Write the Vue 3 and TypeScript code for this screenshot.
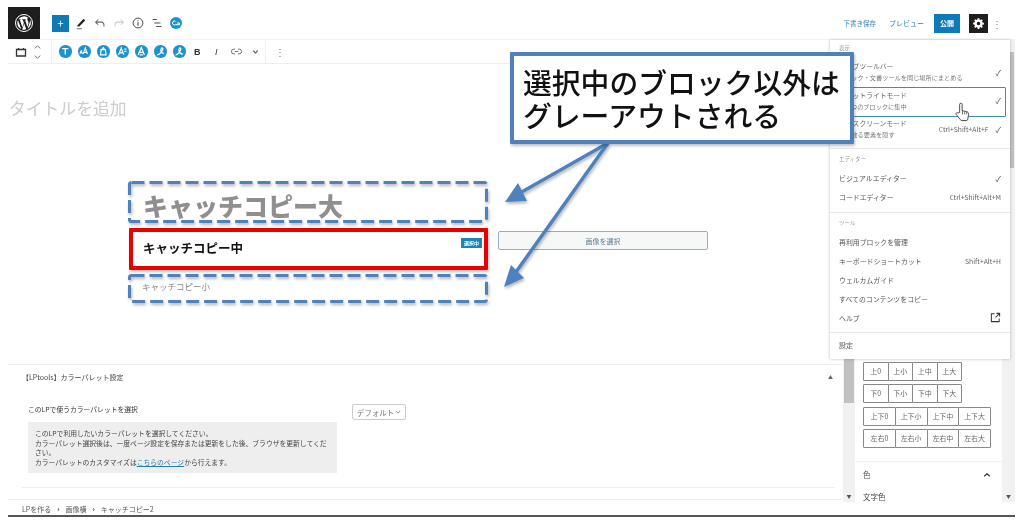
<script setup lang="ts">
const circleIcons: string[] = [
  'M3 3.500h6M6 3.500V9',
  'M1.800 8.500 3 5.800l1.200 2.700M5 8.500l2-5.500 2 5.500M5.800 7h2.400',
  'M3.300 9.500h5.400L8 4.500H4zM4.800 4.500 6 2.500l1.200 2',
  'M2.500 9.500 5 2.800l2.500 6.700M3.500 7.500h3M8 4h2M8 6h2',
  'M3 9.500 6 2.500l3 7M4.200 7h3.600M4.500 9.500h3',
  'M3 9.500c2 0 5-3 5.500-5.500C8.800 2.800 7.500 2.500 7 3.500 6 5.500 7 8 9.500 8',
  'M2.500 9.500c2 0 4.500-3 5-5.500.3-1.200-1-1.500-1.500-.5-1 2 0 4.500 3.500 5.500',
]
const marginRows: string[][] = [
  ['上0', '上小', '上中', '上大'],
  ['下0', '下小', '下中', '下大'],
]
const wideRows: string[][] = [
  ['上下0', '上下小', '上下中', '上下大'],
  ['左右0', '左右小', '左右中', '左右大'],
]
const viewItems = [
  { title: 'トップツールバー', sub: 'ブロック・文書ツールを同じ場所にまとめる', key: '', active: false },
  { title: 'スポットライトモード', sub: 'ひとつのブロックに集中', key: '', active: true },
  { title: 'フルスクリーンモード', sub: '気が散る要素を隠す', key: 'Ctrl+Shift+Alt+F', active: false },
]
const toolItems = [
  { label: '再利用ブロックを管理', key: '' },
  { label: 'キーボードショートカット', key: 'Shift+Alt+H' },
  { label: 'ウェルカムガイド', key: '' },
  { label: 'すべてのコンテンツをコピー', key: '' },
]
</script>

<template>
  <div class="page">
    <div class="screen">
      <header class="topbar">
        <div class="wp-logo">
          <svg viewBox="0 0 24 24" width="20" height="20">
            <circle cx="12" cy="12" r="10.200" fill="none" stroke="#fff" stroke-width="1.200" />
            <path d="M4 12c0 3.200 1.900 6 4.600 7.300L4.800 8.800C4.300 9.800 4 10.900 4 12zm13.400-.4c0-1-.4-1.700-.7-2.200-.4-.7-.8-1.200-.8-1.900 0-.7.6-1.400 1.300-1.400h.1A8 8 0 0 0 5.200 7.600h.5c.8 0 2.100-.1 2.100-.1.400 0 .5.600.1.600 0 0-.4.100-.9.100l3 8.800 1.800-5.300-1.300-3.500c-.4 0-.8-.1-.8-.1-.4 0-.4-.7.1-.6 0 0 1.300.1 2.100.1.800 0 2.100-.1 2.100-.1.400 0 .5.600.1.600 0 0-.4.100-.9.100l2.900 8.700.8-2.800c.4-1 .6-1.800.6-2.500zm-5.200 1.100-2.400 7a8 8 0 0 0 4.900-.1l-.1-.1-2.400-6.800zm7-4.600.1.800c0 .8-.2 1.700-.6 2.900l-2.400 7A8 8 0 0 0 19.200 8.100z" fill="#fff" />
          </svg>
        </div>
        <button class="add-btn">+</button>
        <svg class="ti" viewBox="0 0 16 16"><path d="M4 10.500 11 3.200l1.800 1.800L6 12H4z" fill="#222" /><path d="M3 14.500h6" stroke="#888" stroke-width="1.400" /></svg>
        <svg class="ti" viewBox="0 0 16 16"><path d="M6 4 3 7l3 3M3 7h6.500a3 3 0 0 1 3 3v2" fill="none" stroke="#666" stroke-width="1.200" /></svg>
        <svg class="ti" viewBox="0 0 16 16"><path d="m10 4 3 3-3 3m3-3H6.500a3 3 0 0 0-3 3v2" fill="none" stroke="#ccc" stroke-width="1.200" /></svg>
        <svg class="ti" viewBox="0 0 16 16"><circle cx="8" cy="8" r="5.600" fill="none" stroke="#444" stroke-width="1.100" /><path d="M8 7v4M8 4.800v1.200" stroke="#444" stroke-width="1.200" /></svg>
        <svg class="ti" viewBox="0 0 16 16"><path d="M3 4h5M5 8h7M7 12h6" stroke="#555" stroke-width="1.200" /></svg>
        <span class="lp-icon"><svg viewBox="0 0 12 12" width="12" height="12"><path d="M5.500 4.300a2 2 0 1 0 0 3.400h4V6H7" fill="none" stroke="#fff" stroke-width="1" /></svg></span>
        <div class="top-right">
          <span class="link-text draft">下書き保存</span>
          <span class="link-text preview">プレビュー</span>
          <button class="publish">公開</button>
          <span class="gear">
            <svg viewBox="0 0 16 16" width="13" height="13"><path d="M7 1.500h2l.4 1.800 1 .5 1.500-1 1.400 1.400-1 1.500.5 1 1.800.4v2l-1.800.4-.5 1 1 1.500-1.400 1.400-1.500-1-1 .5-.4 1.800H7l-.4-1.800-1-.5-1.500 1-1.400-1.400 1-1.500-.5-1L1.400 9V7l1.800-.4.5-1-1-1.500 1.400-1.400 1.500 1 1-.5zM8 5.800a2.200 2.200 0 1 0 0 4.400 2.200 2.200 0 0 0 0-4.400z" fill="#fff" fill-rule="evenodd" /></svg>
          </span>
          <span class="kebab">⋮</span>
        </div>
      </header>

      <div class="blockbar">
        <div class="bar-group first">
          <svg class="bi" viewBox="0 0 14 14"><path d="M2.500 4.500h9v6.500h-9zM4.500 4.500V3M9.500 4.500V3" fill="none" stroke="#333" stroke-width="1.300" /></svg>
          <svg class="mover" viewBox="0 0 10 20"><path d="M2 6l3-3 3 3M2 14l3 3 3-3" fill="none" stroke="#666" stroke-width="1" /></svg>
        </div>
        <div class="bar-group tools">
          <span v-for="(d, i) in circleIcons" :key="i" class="circle">
            <svg viewBox="0 0 12 12" width="12.500" height="12.500"><path :d="d" fill="none" stroke="#fff" stroke-width="1.200" /></svg>
          </span>
          <b class="bold">B</b>
          <i class="ital">I</i>
          <svg class="bi small" viewBox="0 0 14 14"><path d="M5.500 4.500H4a2.500 2.500 0 0 0 0 5h1.500M8.500 4.500H10a2.500 2.500 0 0 1 0 5H8.500M5 7h4" fill="none" stroke="#666" stroke-width="1" /></svg>
          <svg class="bi small chev-icon" viewBox="0 0 14 14"><path d="m4.500 6 2.500 2.500L9.500 6" fill="none" stroke="#555" stroke-width="1.200" /></svg>
        </div>
        <div class="bar-group more"><span class="dots">⋮</span></div>
      </div>

      <div class="workspace">
        <main class="editor">
          <h1 class="post-title">タイトルを追加</h1>
          <section class="content">
            <div class="blocks">
              <div class="block big">
                <svg class="dash" viewBox="0 0 360 42" width="360" height="42"><rect x="1.500" y="1.500" width="357" height="39" rx="2" /></svg>
                キャッチコピー大
              </div>
              <div class="block middle">
                キャッチコピー中
                <span class="badge">選択中</span>
              </div>
              <div class="block small-copy">
                <svg class="dash" viewBox="0 0 360 29" width="360" height="29"><rect x="1.500" y="1.500" width="357" height="26" rx="2" /></svg>
                キャッチコピー小
              </div>
            </div>
            <button class="image-btn">画像を選択</button>
          </section>
          <section class="metabox">
            <div class="meta-head">
              <span>【LPtools】カラーパレット設定</span>
              <span class="caret">▲</span>
            </div>
            <div class="meta-body">
              <div class="meta-main">
                <p class="meta-label">このLPで使うカラーパレットを選択</p>
                <div class="note">
                  このLPで利用したいカラーパレットを選択してください。<br />
                  カラーパレット選択後は、一度ページ設定を保存または更新をした後、ブラウザを更新してください。<br />
                  カラーパレットのカスタマイズは<a class="note-link">こちらのページ</a>から行えます。
                </div>
              </div>
              <div class="fake-select">
                デフォルト
                <svg viewBox="0 0 8 8" width="6" height="6"><path d="m1 2.500 3 3 3-3" fill="none" stroke="#666" stroke-width="1" /></svg>
              </div>
            </div>
            <div class="meta-rule"></div>
          </section>
        </main>

        <div class="scroll-a">
          <span class="thumb-a"></span>
          <span class="arrow-down">▼</span>
        </div>

        <aside class="sidebar">
          <div class="button-rows">
            <div class="btn-group">
              <div v-for="(row, r) in marginRows" :key="r" class="btn-row">
                <span v-for="b in row" :key="b" class="m-btn">{{ b }}</span>
              </div>
            </div>
            <div class="btn-group">
              <div v-for="(row, r) in wideRows" :key="'w' + r" class="btn-row wide">
                <span v-for="b in row" :key="b" class="m-btn">{{ b }}</span>
              </div>
            </div>
          </div>
          <div class="color-head">
            <span>色</span>
            <svg viewBox="0 0 10 10" width="8" height="8"><path d="m1.500 6.500 3.500-3 3.500 3" fill="none" stroke="#333" stroke-width="1.500" /></svg>
          </div>
          <div class="color-label">文字色</div>
        </aside>

        <div class="scroll-b">
          <span class="thumb-b"></span>
          <span class="arrow-down">▼</span>
        </div>
      </div>

      <footer class="crumbs">
        <span>LPを作る</span><span class="sep">›</span><span>画像横</span><span class="sep">›</span><span>キャッチコピー2</span>
      </footer>
    </div>

    <div class="menu">
      <section class="menu-sec view-sec">
        <div class="sec-title">表示</div>
        <div v-for="it in viewItems" :key="it.title" class="view-item" :class="{ active: it.active }">
          <div class="view-text">
            <div class="vt">{{ it.title }}</div>
            <div class="vs">{{ it.sub }}</div>
          </div>
          <span v-if="it.key" class="kbd">{{ it.key }}</span>
          <span class="check">✓</span>
        </div>
      </section>
      <section class="menu-sec">
        <div class="sec-title">エディター</div>
        <div class="m-item"><span>ビジュアルエディター</span><span class="check">✓</span></div>
        <div class="m-item"><span>コードエディター</span><span class="kbd">Ctrl+Shift+Alt+M</span></div>
      </section>
      <section class="menu-sec">
        <div class="sec-title">ツール</div>
        <div v-for="t in toolItems" :key="t.label" class="m-item">
          <span>{{ t.label }}</span><span v-if="t.key" class="kbd">{{ t.key }}</span>
        </div>
        <div class="m-item">
          <span>ヘルプ</span>
          <svg viewBox="0 0 12 12" width="11" height="11"><path d="M5 2H1.500v8.500H10V7M7 1.500h3.500V5M10.500 1.500 6 6" fill="none" stroke="#333" stroke-width="1.100" /></svg>
        </div>
      </section>
      <section class="menu-sec last"><div class="m-item">設定</div></section>
    </div>

    <svg class="pointer" viewBox="0 0 20 24" width="19" height="23">
      <path d="M7 12V3.500a1.300 1.300 0 0 1 2.600 0V10l5 1.200c1.200.3 2 1.300 1.800 2.600l-.8 5.200c-.1 1-.8 1.500-1.700 1.500H9.500c-.7 0-1.300-.3-1.700-.9L3.300 14c-.8-1.300 1-2.500 2-1.400z" fill="#fff" stroke="#444" stroke-width="1" />
      <path d="M10 10v4M12.300 11v3M14.500 11.500V14" stroke="#444" stroke-width=".8" />
    </svg>

    <svg class="arrows" viewBox="0 0 1024 522" width="1024" height="522">
      <defs>
        <filter id="sh" x="-20%" y="-20%" width="140%" height="140%">
          <feDropShadow dx="1" dy="2" stdDeviation="1.500" flood-color="#000" flood-opacity=".3" />
        </filter>
      </defs>
      <g filter="url(#sh)">
        <line x1="608" y1="143" x2="520" y2="193" stroke="#4f81bd" stroke-width="3.500" />
        <path d="M505 202 518 183 527 201z" fill="#4f81bd" />
        <line x1="608" y1="143" x2="516" y2="272" stroke="#4f81bd" stroke-width="3.500" />
        <path d="M504 287 511 265 524 278z" fill="#4f81bd" />
      </g>
    </svg>

    <div class="callout">選択中のブロック以外は<br />グレーアウトされる</div>
  </div>
</template>

<style>
html, body { margin: 0; background: #fff; }
</style>

<style scoped>
.page {
  position: relative;
  width: 1024px;
  height: 522px;
  overflow: hidden;
  background: #fff;
  font-family: "Noto Sans CJK JP", "Noto Sans", sans-serif;
  color: #333;
  filter: blur(.35px);
}
.screen {
  display: flex;
  flex-direction: column;
  width: 1007px;
  height: 517px;
  margin-left: 8px;
  border-bottom: 2px solid #555;
  box-sizing: border-box;
  padding-top: 7px;
}
.topbar {
  display: flex;
  align-items: center;
  height: 32px;
  flex: none;
}
.wp-logo {
  width: 32px;
  height: 32px;
  background: #1e1e1e;
  display: flex;
  align-items: center;
  justify-content: center;
}
.add-btn {
  width: 17px;
  height: 17px;
  margin: 0 5px 0 12px;
  border: 0;
  padding: 0;
  background: #0f7ab8;
  color: #fff;
  font-size: 11px;
  line-height: 17px;
  font-family: inherit;
}
.ti {
  width: 14px;
  height: 14px;
  margin-right: 5px;
}
.lp-icon {
  width: 12px;
  height: 12px;
  border-radius: 50%;
  background: #1b93cf;
  margin-left: 1px;
}
.lp-icon svg { display: block; }
.top-right {
  margin-left: auto;
  display: flex;
  align-items: center;
  padding-right: 11px;
}
.link-text { color: #2c7fb0; }
.draft { font-size: 6.500px; }
.preview { margin-left: 13px; font-size: 7px; }
.publish {
  width: 26px;
  height: 19px;
  margin-left: 10px;
  padding: 0;
  border: 0;
  background: #0f7ab8;
  color: #fff;
  font-size: 7px;
  font-weight: 700;
  font-family: inherit;
}
.gear {
  width: 19px;
  height: 19px;
  margin-left: 9px;
  background: #1e1e1e;
  display: flex;
  align-items: center;
  justify-content: center;
}
.kebab {
  width: 14px;
  margin-left: 2px;
  text-align: center;
  font-size: 10px;
  color: #777;
}
.blockbar {
  display: flex;
  height: 25px;
  flex: none;
  border-bottom: 1px solid #eee;
  border-top: 1px solid #f2f2f2;
  box-sizing: border-box;
}
.bar-group {
  display: flex;
  align-items: center;
  border-right: 1px solid #eee;
}
.bar-group.first {
  width: 44px;
  padding-left: 6px;
  gap: 5px;
  box-sizing: border-box;
}
.bi { width: 14px; height: 14px; }
.bi.small { width: 13px; height: 13px; }
.chev-icon { margin-left: -1px; }
.mover { width: 9px; height: 18px; }
.bar-group.tools {
  width: 214px;
  padding-left: 7px;
  gap: 6.500px;
  box-sizing: border-box;
}
.circle {
  width: 12.500px;
  height: 12.500px;
  flex: none;
  border-radius: 50%;
  background: #1b93cf;
  overflow: hidden;
}
.circle svg { display: block; }
.bold { font-size: 9px; margin-left: 2px; color: #333; font-family: "Liberation Sans", sans-serif; }
.ital { font-size: 9px; margin-left: 8px; margin-right: 6px; color: #333; font-family: "Liberation Sans", sans-serif; }
.bar-group.more { border-right: 0; padding-left: 9px; }
.dots { font-size: 10px; color: #777; }
.workspace {
  flex: 1;
  display: flex;
  min-height: 0;
  position: relative;
}
.editor {
  width: 834px;
  flex: none;
  overflow: hidden;
  display: flex;
  flex-direction: column;
  margin-bottom: 2px;
  border-bottom: 1px solid #eee;
  box-sizing: border-box;
}
.post-title {
  margin: 32px 0 0 1px;
  font-size: 16.800px;
  line-height: 24px;
  font-weight: 400;
  color: #ccc;
}
.content {
  display: flex;
  margin: 61px 0 0 121px;
  align-items: flex-start;
  flex: none;
}
.blocks {
  width: 359px;
  display: flex;
  flex-direction: column;
}
.block {
  position: relative;
  box-sizing: border-box;
}
.dash {
  position: absolute;
  left: -1px;
  top: 0;
  filter: drop-shadow(1px 2px 1.500px rgba(0, 0, 0, .3));
}
.dash rect {
  fill: none;
  stroke: #4f81bd;
  stroke-width: 3;
  stroke-dasharray: 13 5;
}
.big {
  height: 42px;
  padding: 3px 0 0 14px;
  font-size: 25px;
  line-height: 42px;
  font-weight: 900;
  color: #8f8f8f;
}
.middle {
  height: 42px;
  margin-top: 5px;
  padding-left: 10px;
  border: 4px solid #e60000;
  border-radius: 1px;
  font-size: 12.500px;
  line-height: 31px;
  font-weight: 700;
  color: #111;
  box-shadow: 1px 2px 3px rgba(0, 0, 0, .25);
}
.badge {
  position: absolute;
  top: 6px;
  right: 2px;
  width: 21px;
  height: 10px;
  background: #1b84b8;
  color: #fff;
  font-size: 5px;
  line-height: 10px;
  text-align: center;
}
.small-copy {
  height: 29px;
  margin-top: 4px;
  padding-left: 13px;
  font-size: 8.500px;
  line-height: 24px;
  color: #888;
}
.image-btn {
  width: 210px;
  height: 19px;
  margin: 50px 0 0 10px;
  padding: 0;
  background: #f6f7f7;
  border: 1px solid #94b0bf;
  border-radius: 2px;
  color: #5d7f93;
  font-size: 7px;
  font-family: inherit;
}
.metabox {
  margin-top: 61px;
  border-top: 1px solid #eee;
  flex: 1;
  min-height: 0;
}
.meta-head {
  display: flex;
  justify-content: space-between;
  padding: 5px 9px 0 14px;
  font-size: 7px;
  line-height: 14px;
  color: #444;
}
.caret { font-size: 5px; color: #666; }
.meta-body {
  display: flex;
  margin-top: 20px;
  padding-left: 20px;
}
.meta-main { width: 309px; }
.meta-label {
  margin: 0;
  font-size: 6.800px;
  line-height: 11px;
  color: #333;
}
.note {
  margin-top: 7px;
  padding: 7px 9px 6px 7px;
  background: #eee;
  font-size: 6.800px;
  line-height: 9.500px;
  color: #444;
}
.note-link { color: #2a7fb0; text-decoration: underline; }
.fake-select {
  width: 54px;
  height: 16px;
  margin: 0 0 0 15px;
  border: 1px solid #ccc;
  box-sizing: border-box;
  display: flex;
  align-items: center;
  justify-content: center;
  gap: 1px;
  font-size: 7.500px;
  color: #777;
  border-radius: 2px;
}
.meta-rule {
  margin: 14px 7px 0 14px;
  border-top: 1px solid #eee;
}
.scroll-a {
  width: 12px;
  margin-left: 1px;
  flex: none;
  background: #f1f1f1;
  position: relative;
}
.thumb-a {
  position: absolute;
  left: 1px;
  right: 1px;
  top: 290px;
  height: 49px;
  background: #c1c1c1;
}
.arrow-down {
  position: absolute;
  bottom: 2px;
  left: 0;
  right: 0;
  text-align: center;
  font-size: 5px;
  line-height: 8px;
  color: #555;
}
.sidebar {
  width: 147px;
  flex: none;
  padding: 298px 0 0 8px;
  box-sizing: border-box;
  overflow: hidden;
}
.button-rows { display: flex; flex-direction: column; gap: 4px; }
.btn-group { display: flex; flex-direction: column; gap: 3px; }
.btn-row { display: flex; height: 19px; }
.btn-row.wide { width: 127px; height: 19px; }
.btn-row.wide .m-btn { flex: 1; }
.m-btn {
  width: 25.500px;
  box-sizing: border-box;
  border: 1px solid #888;
  margin-right: -1px;
  font-size: 7px;
  line-height: 17px;
  text-align: center;
  color: #666;
  border-radius: 1px;
}
.color-head {
  display: flex;
  justify-content: space-between;
  align-items: center;
  margin: 13px 0 0 -8px;
  padding: 7px 11px 0 8px;
  border-top: 1px solid #f0f0f0;
  font-size: 7.500px;
  line-height: 12px;
  color: #555;
}
.color-label {
  margin-top: 10px;
  font-size: 7.500px;
  line-height: 12px;
  color: #444;
}
.scroll-b {
  width: 13px;
  margin-top: -24px;
  flex: none;
  background: #f1f1f1;
  position: relative;
}
.thumb-b {
  position: absolute;
  left: 2px;
  right: 1px;
  top: 12px;
  height: 116px;
  background: #c1c1c1;
}
.crumbs {
  height: 13px;
  flex: none;
  display: flex;
  align-items: center;
  padding-left: 14px;
  gap: 6px;
  font-size: 7px;
  color: #555;
  background: #fff;
}
.sep { color: #333; font-weight: 700; }
.menu {
  position: absolute;
  left: 830px;
  top: 40px;
  width: 180px;
  height: 319px;
  box-sizing: border-box;
  background: #fff;
  box-shadow: 0 0 3px rgba(0, 0, 0, .25);
  font-size: 6.900px;
  color: #555;
}
.menu-sec {
  padding: 5px 0 5px;
  border-bottom: 1px solid #e8e8e8;
}
.view-sec { padding: 3px 0; height: 108.500px; box-sizing: border-box; }
.view-sec .sec-title { margin-bottom: 3.500px; }
.menu-sec.last { border-bottom: 0; padding-top: 3px; }
.sec-title {
  padding-left: 9px;
  margin-bottom: 4.500px;
  font-size: 5.500px;
  line-height: 11px;
  color: #999;
}
.view-item {
  display: flex;
  align-items: center;
  height: 29px;
  padding: 0 9px 0 9px;
  box-sizing: border-box;
}
.view-item:last-child { margin-top: -2px; }
.view-item.active {
  margin-right: 4px;
  height: 30px;
  border: 1px solid #3f8fa6;
  border-radius: 1px;
  padding: 0 4px 2px 8px;
}
.view-text { flex: 1; min-width: 0; }
.vt { font-size: 6.800px; line-height: 11px; color: #666; white-space: nowrap; }
.vs { font-size: 6.200px; line-height: 11px; color: #777; white-space: nowrap; }
.kbd { font-size: 6.800px; color: #666; white-space: nowrap; margin-right: 7px; }
.m-item .kbd { margin-right: 0; }
.check { font-size: 8px; color: #444; }
.m-item {
  display: flex;
  align-items: center;
  justify-content: space-between;
  height: 18.800px;
  padding: 0 9px;
  color: #555;
}
.pointer {
  position: absolute;
  left: 953px;
  top: 101px;
}
.arrows {
  position: absolute;
  left: 0;
  top: 0;
  pointer-events: none;
}
.callout {
  position: absolute;
  left: 510px;
  top: 52px;
  width: 344px;
  height: 92px;
  box-sizing: border-box;
  padding: 9px 0 0 9px;
  background: #fff;
  border: 4px solid #4f81bd;
  border-radius: 1px;
  font-size: 28.800px;
  line-height: 33px;
  font-weight: 500;
  color: #111;
  white-space: nowrap;
  box-shadow: 1px 2px 3px rgba(0, 0, 0, .25);
}
</style>
